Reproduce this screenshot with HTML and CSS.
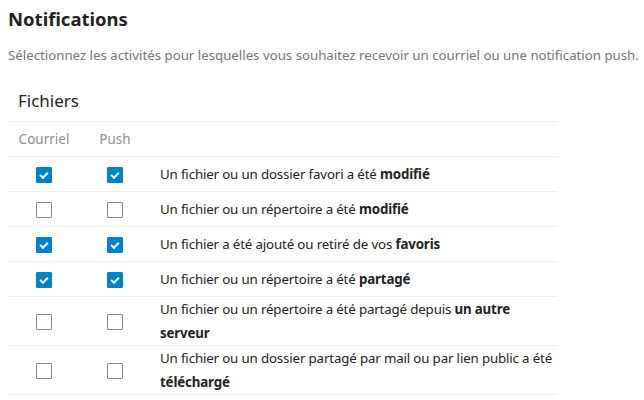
FILE: index.html
```html
<!DOCTYPE html>
<html lang="fr">
<head>
<meta charset="utf-8">
<title>Notifications</title>
<link rel="stylesheet" href="styles.css">
</head>
<body>
<div class="section">
  <h2 class="title">Notifications</h2>
  <p class="desc">Sélectionnez les activités pour lesquelles vous souhaitez recevoir un courriel ou une notification push.</p>
  <h3 class="group">Fichiers</h3>
  <table class="grid">
    <thead>
      <tr>
        <th class="col-check">Courriel</th>
        <th class="col-check">Push</th>
        <th class="col-text"></th>
      </tr>
    </thead>
    <tbody>
      <tr>
        <td class="col-check"><span class="cb on"></span></td>
        <td class="col-check"><span class="cb on"></span></td>
        <td class="col-text">Un fichier ou un dossier favori a été <strong>modifié</strong></td>
      </tr>
      <tr>
        <td class="col-check"><span class="cb"></span></td>
        <td class="col-check"><span class="cb"></span></td>
        <td class="col-text">Un fichier ou un répertoire a été <strong>modifié</strong></td>
      </tr>
      <tr>
        <td class="col-check"><span class="cb on"></span></td>
        <td class="col-check"><span class="cb on"></span></td>
        <td class="col-text">Un fichier a été ajouté ou retiré de vos <strong>favoris</strong></td>
      </tr>
      <tr>
        <td class="col-check"><span class="cb on"></span></td>
        <td class="col-check"><span class="cb on"></span></td>
        <td class="col-text">Un fichier ou un répertoire a été <strong>partagé</strong></td>
      </tr>
      <tr>
        <td class="col-check"><span class="cb"></span></td>
        <td class="col-check"><span class="cb"></span></td>
        <td class="col-text">Un fichier ou un répertoire a été partagé depuis <strong>un autre serveur</strong></td>
      </tr>
      <tr>
        <td class="col-check"><span class="cb"></span></td>
        <td class="col-check"><span class="cb"></span></td>
        <td class="col-text">Un fichier ou un dossier partagé par mail ou par lien public a été <strong>téléchargé</strong></td>
      </tr>
    </tbody>
  </table>
</div>
</body>
</html>
```

FILE: styles.css
```css
html, body {
  margin: 0;
  padding: 0;
  background: #fff;
}
body {
  font-family: "Noto Sans", "Open Sans", sans-serif;
  color: #222;
  font-size: 13px;
}
.section {
  padding: 6px 8px 0 8px;
}
.title {
  margin: 0;
  font-size: 18.5px;
  font-weight: 700;
  line-height: 26px;
  color: #222;
}
.desc {
  margin: 12px 0 0 0;
  font-size: 13.25px;
  line-height: 22px;
  color: #767676;
  white-space: nowrap;
}
.group {
  margin: 22px 0 0 10px;
  font-size: 17px;
  font-weight: 400;
  line-height: 26px;
  color: #222;
}
.grid {
  margin-top: 7px;
  width: 550px;
  border-collapse: collapse;
  border-top: 1px solid #ededed;
}
.grid th, .grid td {
  padding: 0;
  border-bottom: 1px solid #ededed;
  height: 34px;
  vertical-align: middle;
  line-height: 24px;
}
.grid td {
  font-size: 13.3px;
  letter-spacing: -0.15px;
}
.grid th {
  font-weight: 400;
  color: #8e8e8e;
  font-size: 13.5px;
}
.col-check {
  text-align: center;
}
th.col-check:first-child, td.col-check:first-child {
  width: 72px;
}
th.col-check:nth-child(2), td.col-check:nth-child(2) {
  width: 70px;
}
.col-text {
  padding-left: 10px !important;
  text-align: left;
}
.grid strong {
  font-weight: 700;
}
.cb {
  display: inline-block;
  box-sizing: border-box;
  width: 16px;
  height: 16px;
  border: 1px solid #878787;
  border-radius: 1px;
  vertical-align: middle;
  position: relative;
}
.cb.on {
  background: #0082c9;
  border-color: #0082c9;
}
.cb.on::after {
  content: "";
  position: absolute;
  width: 6px;
  height: 3px;
  border-left: 2px solid #fff;
  border-bottom: 2px solid #fff;
  transform: rotate(-45deg);
  transform-origin: 50% 50%;
  top: 4px;
  left: 3px;
}
```
